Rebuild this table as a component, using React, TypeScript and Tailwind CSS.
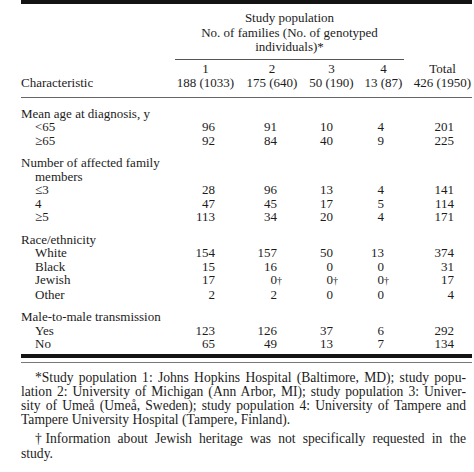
const cols = 'grid grid-cols-[150px_69px_64px_55px_49px_64px]';

type Row = { label: string; values: string[]; dagger?: boolean[] };
type Group = { title: string; rows: Row[] };

const groups: Group[] = [
  {
    title: 'Mean age at diagnosis, y',
    rows: [
      { label: '<65', values: ['96', '91', '10', '4', '201'] },
      { label: '≥65', values: ['92', '84', '40', '9', '225'] },
    ],
  },
  {
    title: 'Number of affected family members',
    rows: [
      { label: '≤3', values: ['28', '96', '13', '4', '141'] },
      { label: '4', values: ['47', '45', '17', '5', '114'] },
      { label: '≥5', values: ['113', '34', '20', '4', '171'] },
    ],
  },
  {
    title: 'Race/ethnicity',
    rows: [
      { label: 'White', values: ['154', '157', '50', '13', '374'] },
      { label: 'Black', values: ['15', '16', '0', '0', '31'] },
      {
        label: 'Jewish',
        values: ['17', '0', '0', '0', '17'],
        dagger: [false, true, true, true, false],
      },
      { label: 'Other', values: ['2', '2', '0', '0', '4'] },
    ],
  },
  {
    title: 'Male-to-male transmission',
    rows: [
      { label: 'Yes', values: ['123', '126', '37', '6', '292'] },
      { label: 'No', values: ['65', '49', '13', '7', '134'] },
    ],
  },
];

// right padding per numeric column, so the figures line up as in print
const valuePad = ['pr-[25px]', 'pr-[27px]', 'pr-[26px]', 'pr-[24px]', 'pr-[18px]'];

const heads = [
  { n: '1', count: '188 (1033)' },
  { n: '2', count: '175 (640)' },
  { n: '3', count: '50 (190)' },
  { n: '4', count: '13 (87)' },
];

export default function App() {
  return (
    <div className="min-h-screen bg-white text-[#1c1c1c] font-['Liberation_Serif','Times_New_Roman',serif]">
      <div className="pl-[21px] w-[472px]">
        {/* top rule */}
        <div className="h-[4px] bg-[#141414]" />

        {/* header */}
        <div className={`${cols} text-[13px] leading-[14.5px]`}>
          <div className="row-span-2 flex items-end pb-[7px]">
            <span className="leading-[14px]">Characteristic</span>
          </div>
          <div className="col-span-4 pt-[7px] text-center">
            Study population
            <br />
            No. of families (No. of genotyped
            <br />
            individuals)*
            <div className="mt-[4px] mx-[4px] h-px bg-[#555]" />
          </div>
          <div className="row-span-2 flex flex-col justify-end items-center pb-[7px] pl-[5px] leading-[14px]">
            <span>Total</span>
            <span className="whitespace-nowrap">426 (1950)</span>
          </div>
          {heads.map((h) => (
            <div
              key={h.n}
              className="flex flex-col items-center pt-[2px] pb-[7px] leading-[14px] whitespace-nowrap"
            >
              <span>{h.n}</span>
              <span>{h.count}</span>
            </div>
          ))}
        </div>
        <div className="h-px bg-[#666]" />

        {/* body */}
        <div className="pt-[9px] pb-[3px] text-[13px] leading-[13.5px]">
          {groups.map((g, gi) => (
            <div key={g.title} className={gi > 0 ? 'mt-[9px]' : ''}>
              <div className={cols}>
                <div className="pl-[14px] -indent-[14px]">{g.title}</div>
              </div>
              {g.rows.map((r) => (
                <div key={r.label} className={cols}>
                  <div className="pl-[14px]">{r.label}</div>
                  {r.values.map((v, i) => (
                    <div key={i} className={`text-right ${valuePad[i]}`}>
                      {v}
                      {r.dagger?.[i] && <span className="inline-block w-0 text-[10px]">†</span>}
                    </div>
                  ))}
                </div>
              ))}
            </div>
          ))}
        </div>

        {/* bottom rules */}
        <div className="h-[4px] bg-[#141414]" />
        <div className="mt-[4px] h-px bg-[#777]" />

        {/* footnotes */}
        <div className="mt-[8px] w-[445px] text-[13.6px] leading-[14.2px] text-justify">
          <p className="indent-[14px] [text-align-last:justify]">
            *Study population 1: Johns Hopkins Hospital (Baltimore, MD); study popu-
          </p>
          <p className="[text-align-last:justify]">
            lation 2: University of Michigan (Ann Arbor, MI); study population 3: Univer-
          </p>
          <p className="[text-align-last:justify]">
            sity of Umeå (Umeå, Sweden); study population 4: University of Tampere and
          </p>
          <p>Tampere University Hospital (Tampere, Finland).</p>
          <p className="mt-[5px] indent-[14px] [text-align-last:justify]">
            †Information about Jewish heritage was not specifically requested in the
          </p>
          <p>study.</p>
        </div>
      </div>
    </div>
  );
}
